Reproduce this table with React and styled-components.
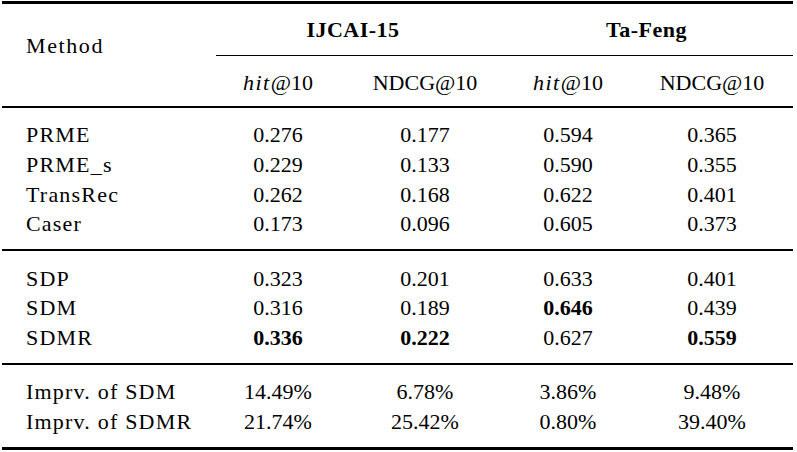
import React from "react";
import styled, { createGlobalStyle } from "styled-components";

const Global = createGlobalStyle`
  html, body { margin: 0; padding: 0; background: #fff; }
`;

const COLS = "204px 144px 150px 136px 157px";

const Page = styled.div`
  width: 791px;
  margin-left: 2px;
  padding-top: 1px;
  font-family: "Liberation Serif", "Times New Roman", serif;
  font-size: 22px;
  color: #000;
`;

const Table = styled.div`
  border-top: 3px solid #000;
  border-bottom: 3px solid #000;
`;

const Header = styled.div`
  display: grid;
  grid-template-columns: ${COLS};
  grid-template-rows: 50.7px 1.5px auto;
  border-bottom: 2px solid #000;
`;

const MethodHead = styled.div`
  grid-column: 1;
  grid-row: 1 / 4;
  padding: 26.7px 0 0 24px;
  line-height: 29.7px;
  letter-spacing: 1.6px;
`;

const GroupTitle = styled.div`
  grid-row: 1;
  grid-column: ${(p) => p.$cols};
  padding-top: 11px;
  line-height: 29.7px;
  font-weight: bold;
  text-align: center;
  letter-spacing: 0.5px;
`;

const CmidRule = styled.div`
  grid-row: 2;
  grid-column: 2 / 6;
  margin-left: 10px;
  background: #000;
`;

const SubHead = styled.div`
  grid-row: 3;
  grid-column: ${(p) => p.$col};
  padding: 12px ${(p) => (p.$last ? "5px" : "0")} 8px 0;
  line-height: 29.7px;
  text-align: center;
`;

const Italic = styled.i`
  letter-spacing: 1.5px;
`;

const Section = styled.div`
  padding: 12.5px 0 10px;
  border-bottom: ${(p) => (p.$last ? "none" : "2px solid #000")};
`;

const Row = styled.div`
  display: grid;
  grid-template-columns: ${COLS};
  line-height: 29.7px;
  height: 29.7px;
`;

const Label = styled.div`
  padding-left: 24px;
  white-space: nowrap;
  letter-spacing: 1.2px;
`;

const Cell = styled.div`
  text-align: center;
  padding-right: ${(p) => (p.$last ? "5px" : "0")};
  font-weight: ${(p) => (p.$bold ? "bold" : "normal")};
`;

const Metric = ({ name }) =>
  name === "hit" ? (
    <>
      <Italic>hit</Italic>@10
    </>
  ) : (
    <>NDCG@10</>
  );

const sections = [
  [
    ["PRME", "0.276", "0.177", "0.594", "0.365"],
    ["PRME_s", "0.229", "0.133", "0.590", "0.355"],
    ["TransRec", "0.262", "0.168", "0.622", "0.401"],
    ["Caser", "0.173", "0.096", "0.605", "0.373"],
  ],
  [
    ["SDP", "0.323", "0.201", "0.633", "0.401"],
    ["SDM", "0.316", "0.189", "*0.646", "0.439"],
    ["SDMR", "*0.336", "*0.222", "0.627", "*0.559"],
  ],
  [
    ["Imprv. of SDM", "14.49%", "6.78%", "3.86%", "9.48%"],
    ["Imprv. of SDMR", "21.74%", "25.42%", "0.80%", "39.40%"],
  ],
];

export default function App() {
  return (
    <Page>
      <Global />
      <Table>
        <Header>
          <MethodHead>Method</MethodHead>
          <GroupTitle $cols="2 / 4">IJCAI-15</GroupTitle>
          <GroupTitle $cols="4 / 6">Ta-Feng</GroupTitle>
          <CmidRule />
          <SubHead $col={2}>
            <Metric name="hit" />
          </SubHead>
          <SubHead $col={3}>
            <Metric name="ndcg" />
          </SubHead>
          <SubHead $col={4}>
            <Metric name="hit" />
          </SubHead>
          <SubHead $col={5} $last>
            <Metric name="ndcg" />
          </SubHead>
        </Header>
        {sections.map((rows, si) => (
          <Section key={si} $last={si === sections.length - 1}>
            {rows.map(([label, ...vals]) => (
              <Row key={label}>
                <Label>{label}</Label>
                {vals.map((v, i) => {
                  const bold = v.startsWith("*");
                  return (
                    <Cell key={i} $bold={bold} $last={i === 3}>
                      {bold ? v.slice(1) : v}
                    </Cell>
                  );
                })}
              </Row>
            ))}
          </Section>
        ))}
      </Table>
    </Page>
  );
}
